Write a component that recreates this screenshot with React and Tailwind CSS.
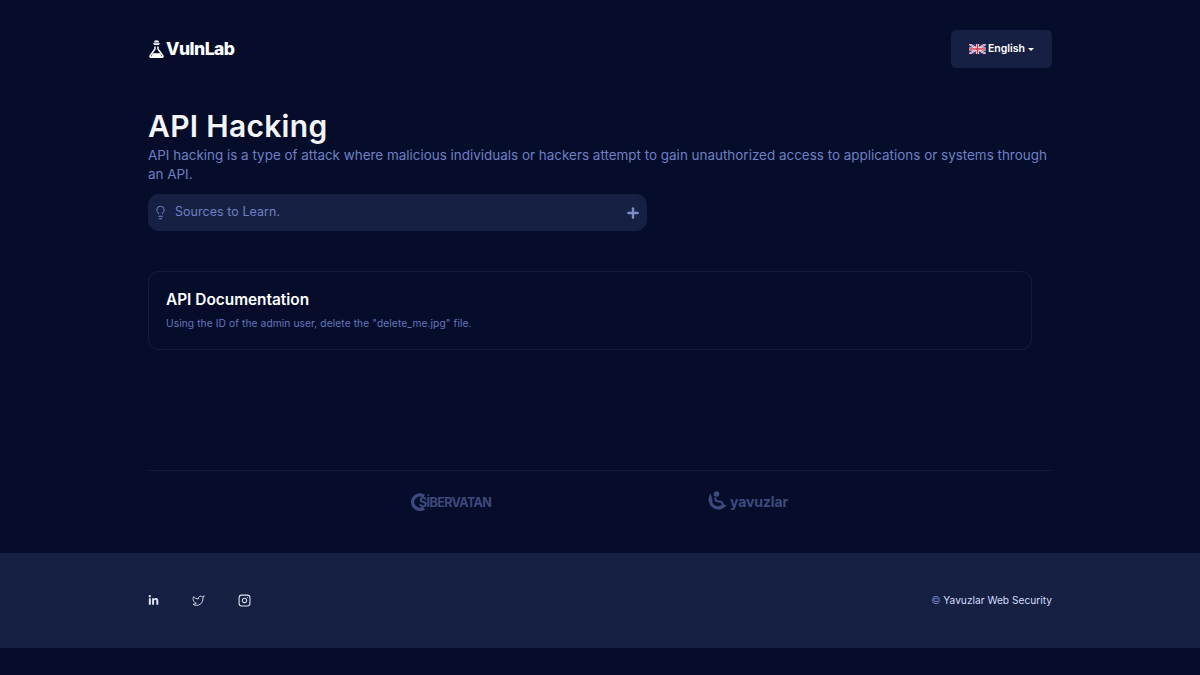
import React from "react";
import { Twitter, Instagram, Lightbulb, Plus } from "lucide-react";
import { FaLinkedinIn } from "react-icons/fa";

const Flag = () => (
  <svg width="17" height="10" viewBox="0 0 60 36" className="shrink-0">
    <rect width="60" height="36" fill="#2b3a7a" />
    <path d="M0 0L60 36M60 0L0 36" stroke="#fff" strokeWidth="7" />
    <path d="M0 0L60 36M60 0L0 36" stroke="#d8344f" strokeWidth="2.5" />
    <path d="M30 0V36M0 18H60" stroke="#fff" strokeWidth="11" />
    <path d="M30 0V36M0 18H60" stroke="#d8344f" strokeWidth="6" />
  </svg>
);

const Flask = () => (
  <svg width="15" height="18" viewBox="0 0 15 18" fill="none" className="shrink-0">
    <path d="M5 2.4C5 1 6 .3 7.5 .3S10 1 10 2.4Z" fill="#fff" />
    <path d="M3.6 3.2H11.4L9.6 5H5.4Z" fill="#fff" />
    <path d="M6 6.4V9L1.2 15.6C.7 16.5 1.2 17.3 2.2 17.3H12.8C13.8 17.3 14.3 16.5 13.8 15.6L9 9V6.4" stroke="#fff" strokeWidth="1.5" />
    <path d="M3.8 13.2H11.2L13 17H2Z" fill="#fff" />
  </svg>
);

const SiberMark = () => (
  <svg width="17" height="18" viewBox="0 0 17 18" className="shrink-0">
    <path d="M13 3.2A7.2 7.2 0 1 0 13 15" fill="none" stroke="#3d4a7d" strokeWidth="3.4" />
  </svg>
);

const YavuzMark = () => (
  <svg width="21" height="21" viewBox="0 0 21 21" className="shrink-0">
    <path d="M4.5 2.5A9.6 9.6 0 1 0 20.5 14.5L16.5 12.8A5.6 5.6 0 0 1 6.4 8.6Z" fill="#3d4a7d" />
    <circle cx="10.5" cy="3" r="2.8" fill="#3d4a7d" />
    <path d="M9 6.5L10 10L15.5 11L18 15" fill="none" stroke="#3d4a7d" strokeWidth="2" />
  </svg>
);

export default function App() {
  return (
    <div className="min-h-[675px] bg-[#050d2b] flex flex-col font-['Inter',sans-serif] overflow-hidden">
      <div className="w-[904px] ml-[148px] flex flex-col">
        <header className="h-[38px] mt-[30px] flex items-center justify-between">
          <div className="flex items-center gap-[2px] pl-[1px]">
            <Flask />
            <span className="text-[17.5px] leading-none font-extrabold text-white tracking-[-0.5px]">VulnLab</span>
          </div>
          <button className="w-[101px] h-[38px] rounded-[5px] bg-[#162043] flex items-center justify-center gap-[2px] text-white text-[10.5px] font-semibold">
            <Flag />
            <span>English</span>
            <span className="w-0 h-0 ml-[1px] border-x-[3px] border-x-transparent border-t-[3px] border-t-white" />
          </button>
        </header>

        <h1 className="mt-[40px] text-[30px] leading-[36px] font-semibold text-[#f5f5f7] tracking-[0.3px]">API Hacking</h1>
        <p className="mt-[2px] text-[#6f80c4] text-[13.45px] leading-[19px]">
          API hacking is a type of attack where malicious individuals or hackers attempt to gain unauthorized access to applications or systems through an API.
        </p>

        <div className="mt-[10px] w-[499px] h-[37px] rounded-[11px] bg-[#162043] flex items-center justify-between pl-[5px] pr-[6px]">
          <div className="flex items-center gap-[7px] text-[#6f80c4]">
            <Lightbulb size={15} strokeWidth={1.6} />
            <span className="text-[12.4px] tracking-[0.1px]">Sources to Learn.</span>
          </div>
          <Plus size={16} strokeWidth={3.6} className="text-[#7d8cc4]" />
        </div>

        <section className="mt-[40px] w-[884px] h-[79px] rounded-[11px] border border-[#131c3e] pl-[17px] pt-[18px]">
          <h2 className="text-[15.4px] leading-[20px] font-semibold text-white">API Documentation</h2>
          <p className="mt-[7px] text-[10.2px] leading-[13px] text-[#6577bd] tracking-[0.1px]">
            Using the ID of the admin user, delete the "delete_me.jpg" file.
          </p>
        </section>

        <div className="mt-[120px] h-px bg-[#131c3e]" />
        <div className="h-[61px] flex items-center text-[#3d4a7d] pl-[263px]">
          <div className="w-[295px] flex items-center">
            <SiberMark />
            <span className="-ml-[9px] mt-[3px] text-[12.5px] font-bold tracking-[-0.6px]">SİBERVATAN</span>
          </div>
          <div className="flex items-center gap-[3px]">
            <YavuzMark />
            <span className="text-[14px] font-bold tracking-[-0.1px]">yavuzlar</span>
          </div>
        </div>
      </div>

      <footer className="mt-[21px] h-[95px] bg-[#162043] px-[148px] flex items-center justify-between">
        <div className="flex items-center gap-[33px] text-[#dfe3f1]">
          <FaLinkedinIn size={11} />
          <Twitter size={13} strokeWidth={1.7} />
          <Instagram size={13} strokeWidth={2} />
        </div>
        <div className="text-[10.2px] text-[#d5defc]">
          <span className="text-[#6f80c4]">©</span> Yavuzlar Web Security
        </div>
      </footer>
    </div>
  );
}
